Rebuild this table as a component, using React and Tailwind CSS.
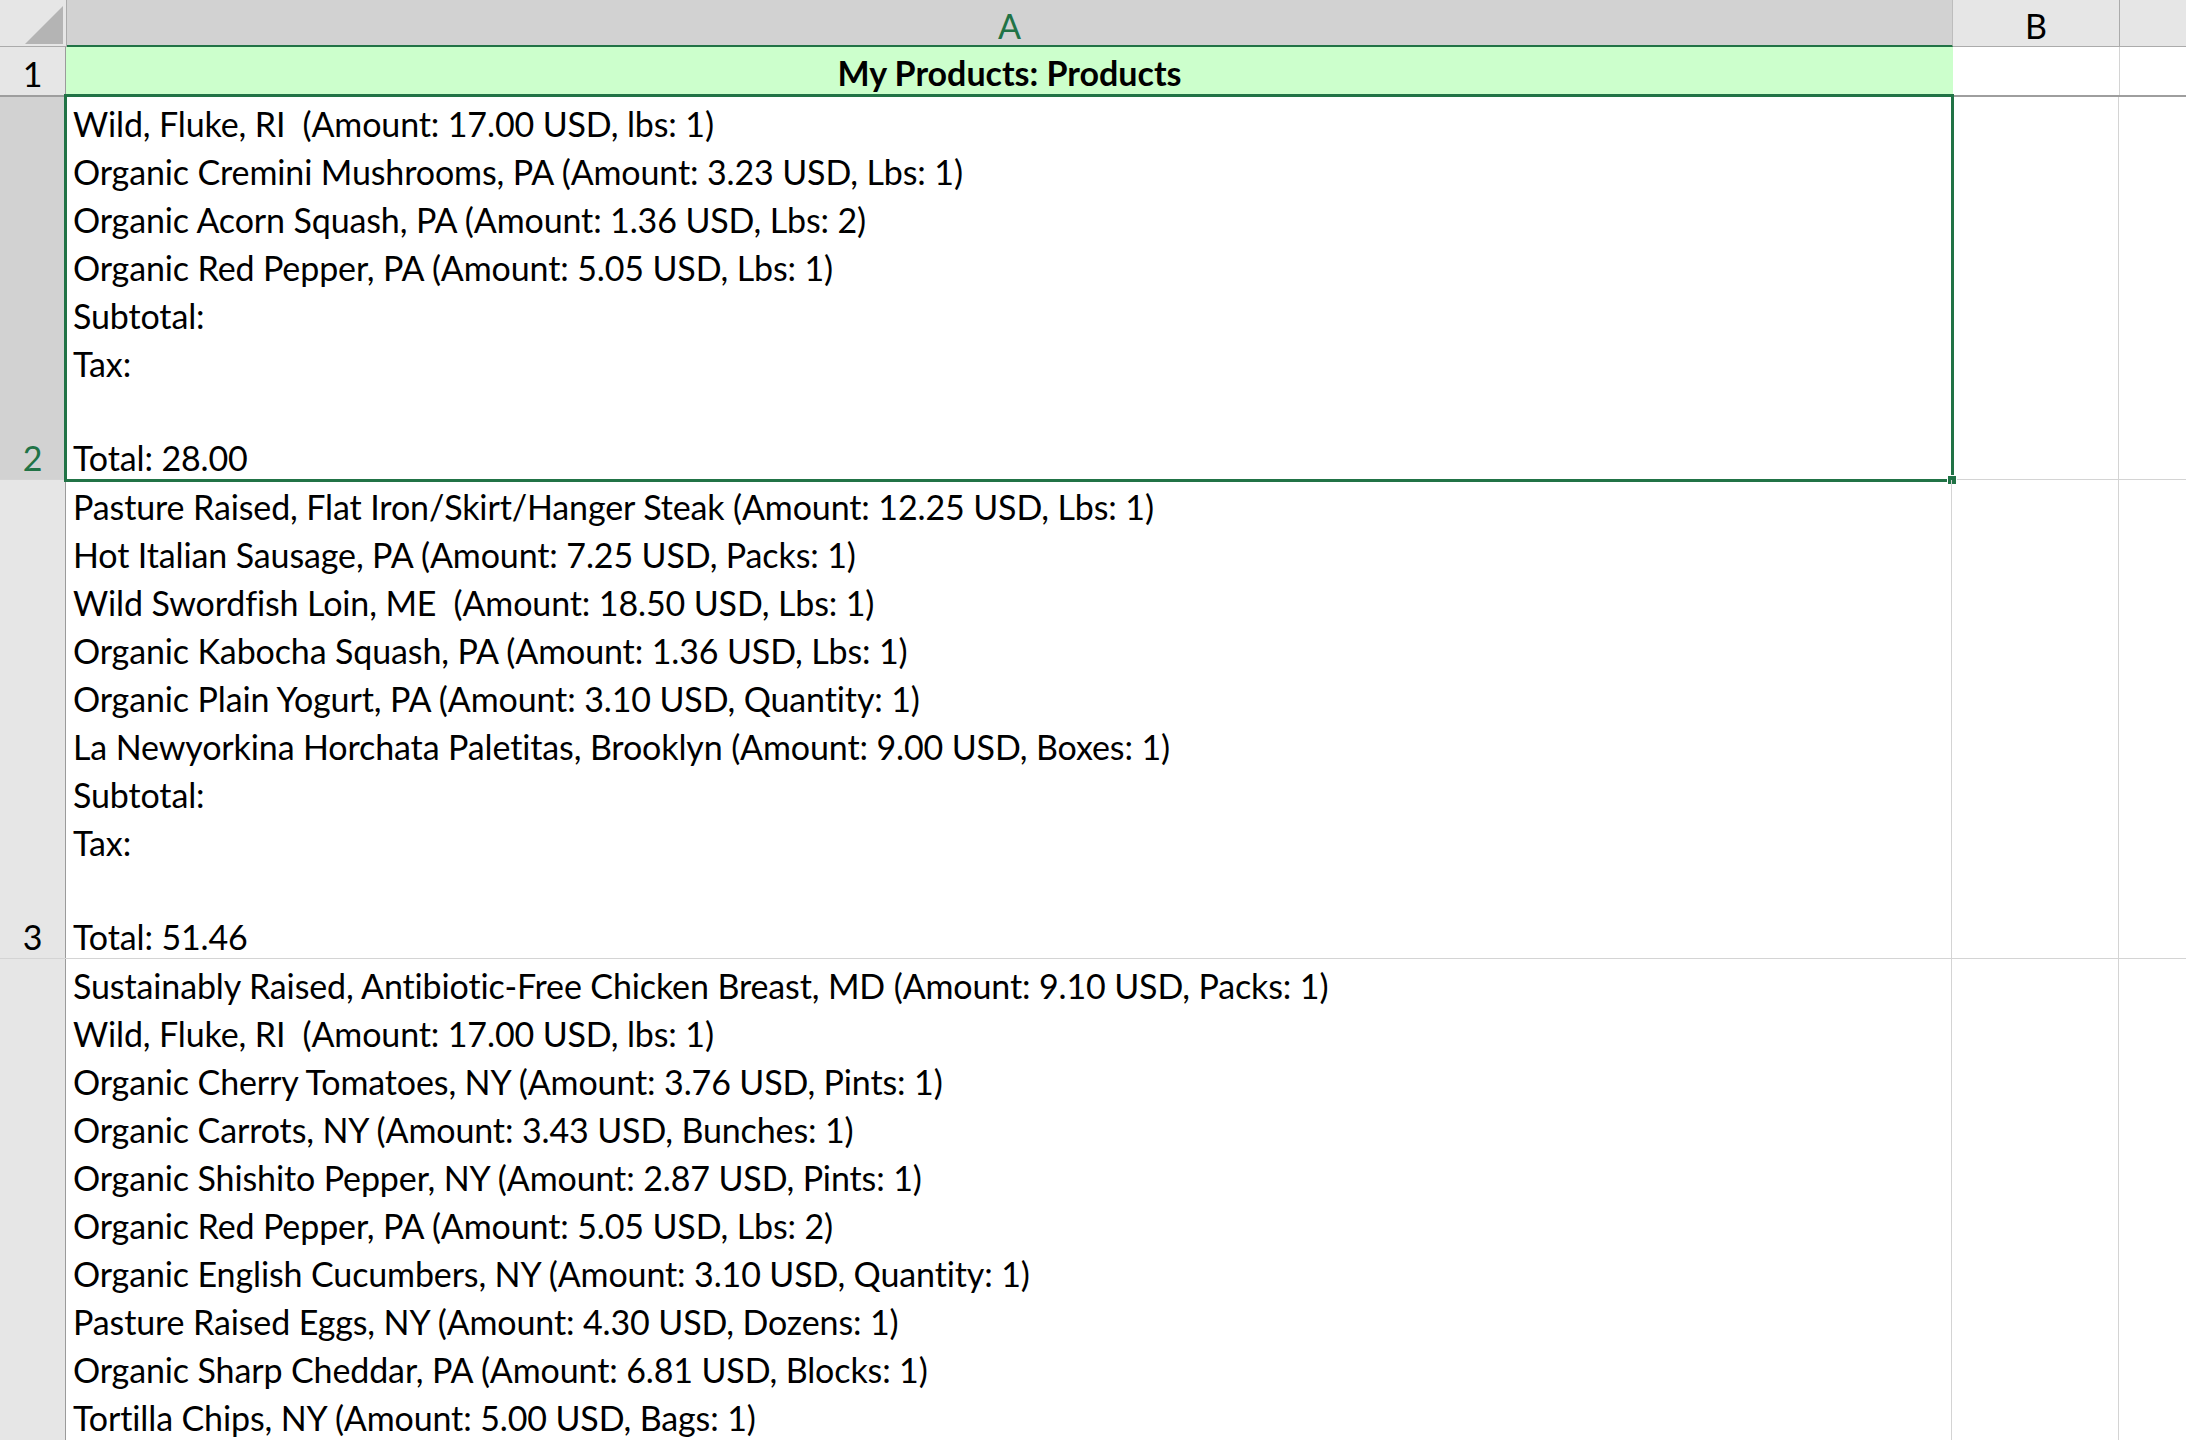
import React from 'react';

const rows = [
  {
    num: 2,
    selected: true,
    lines: [
      'Wild, Fluke, RI  (Amount: 17.00 USD, lbs: 1)',
      'Organic Cremini Mushrooms, PA (Amount: 3.23 USD, Lbs: 1)',
      'Organic Acorn Squash, PA (Amount: 1.36 USD, Lbs: 2)',
      'Organic Red Pepper, PA (Amount: 5.05 USD, Lbs: 1)',
      'Subtotal:',
      'Tax:',
      '',
      'Total: 28.00',
    ],
  },
  {
    num: 3,
    lines: [
      'Pasture Raised, Flat Iron/Skirt/Hanger Steak (Amount: 12.25 USD, Lbs: 1)',
      'Hot Italian Sausage, PA (Amount: 7.25 USD, Packs: 1)',
      'Wild Swordfish Loin, ME  (Amount: 18.50 USD, Lbs: 1)',
      'Organic Kabocha Squash, PA (Amount: 1.36 USD, Lbs: 1)',
      'Organic Plain Yogurt, PA (Amount: 3.10 USD, Quantity: 1)',
      'La Newyorkina Horchata Paletitas, Brooklyn (Amount: 9.00 USD, Boxes: 1)',
      'Subtotal:',
      'Tax:',
      '',
      'Total: 51.46',
    ],
  },
  {
    num: 4,
    // rest of this cell runs past the bottom of the window
    lines: [
      'Sustainably Raised, Antibiotic-Free Chicken Breast, MD (Amount: 9.10 USD, Packs: 1)',
      'Wild, Fluke, RI  (Amount: 17.00 USD, lbs: 1)',
      'Organic Cherry Tomatoes, NY (Amount: 3.76 USD, Pints: 1)',
      'Organic Carrots, NY (Amount: 3.43 USD, Bunches: 1)',
      'Organic Shishito Pepper, NY (Amount: 2.87 USD, Pints: 1)',
      'Organic Red Pepper, PA (Amount: 5.05 USD, Lbs: 2)',
      'Organic English Cucumbers, NY (Amount: 3.10 USD, Quantity: 1)',
      'Pasture Raised Eggs, NY (Amount: 4.30 USD, Dozens: 1)',
      'Organic Sharp Cheddar, PA (Amount: 6.81 USD, Blocks: 1)',
      'Tortilla Chips, NY (Amount: 5.00 USD, Bags: 1)',
      'Subtotal:',
      'Tax:',
      '',
      'Total:',
    ],
  },
];

const font = { fontFamily: 'Lato, "Liberation Sans", sans-serif' };

const DataRow = ({ row }) => {
  const h = row.lines.length * 48 - 1;
  return (
    <div className="flex shrink-0 border-b border-[#d4d4d4]" style={{ height: h }}>
      {/* row header */}
      <div
        className={`w-[66px] shrink-0 border-r border-[#9b9b9b] flex items-end justify-center leading-[48px] ${
          row.selected ? 'bg-[#d2d2d2] text-[#217346]' : 'bg-[#e6e6e6] text-black'
        }`}
      >
        <span className="translate-y-[3px]">{row.num}</span>
      </div>
      {/* column A */}
      <div className="relative w-[1886px] shrink-0 border-r border-[#d4d4d4] flex flex-col justify-end pl-[7px] leading-[48px] tracking-[-0.12px]">
        {row.lines.map((l, i) => (
          <div key={i} className="whitespace-pre h-[48px] translate-y-[3px]">{l}</div>
        ))}
        {row.selected && (
          <div className="absolute left-[-2px] right-[-3px] top-[-3px] bottom-[-3px] border-[3px] border-[#217346] pointer-events-none">
            <div className="absolute right-[-6px] bottom-[-6px] w-[10px] h-[10px] bg-[#217346] border border-white" />
          </div>
        )}
      </div>
      {/* column B */}
      <div className="w-[167px] shrink-0 border-r border-[#d4d4d4]" />
      <div className="flex-1" />
    </div>
  );
};

export default function App() {
  return (
    <div className="w-[2186px] h-[1440px] overflow-hidden bg-white text-black text-[34px]" style={font}>
      {/* column headers */}
      <div className="flex h-[47px]">
        <div className="w-[67px] shrink-0 bg-[#e6e6e6] border-r border-b border-[#ababab] relative">
          <svg className="absolute inset-0" width="66" height="46" viewBox="0 0 66 46">
            <polygon points="25,44 63,44 63,6" fill="#b4b4b4" />
          </svg>
        </div>
        <div className="w-[1886px] shrink-0 bg-[#d2d2d2] border-r border-[#bdbdbd] border-b-2 border-b-[#217346] flex items-center justify-center text-[#217346] leading-[46px]">
          <span className="translate-y-[3px]">A</span>
        </div>
        <div className="w-[167px] shrink-0 bg-[#e6e6e6] border-r border-b border-[#ababab] flex items-center justify-center leading-[46px]">
          <span className="translate-y-[3px]">B</span>
        </div>
        <div className="flex-1 bg-[#e6e6e6] border-b border-[#ababab]" />
      </div>

      {/* row 1 */}
      <div className="flex h-[50px] border-b-2 border-[#9e9e9e]">
        <div className="w-[66px] shrink-0 bg-[#e6e6e6] border-r border-[#9b9b9b] flex items-center justify-center leading-[48px]">
          <span className="translate-y-[3px]">1</span>
        </div>
        <div className="w-[1887px] shrink-0 bg-[#ccffcc] flex items-center justify-center font-bold leading-[48px]">
          <span className="translate-y-[2px]">My Products: Products</span>
        </div>
        <div className="w-[167px] shrink-0 border-r border-[#d4d4d4]" />
        <div className="flex-1" />
      </div>

      {rows.map(r => (
        <DataRow key={r.num} row={r} />
      ))}
    </div>
  );
}
